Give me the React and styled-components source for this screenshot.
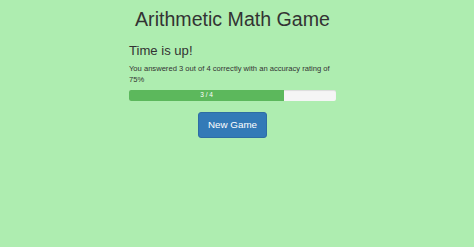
import React from "react";
import styled, { createGlobalStyle } from "styled-components";

const GlobalStyle = createGlobalStyle`
  html, body {
    margin: 0;
    padding: 0;
    background: #aeedb0;
  }
  body {
    font-family: "Liberation Sans", Arial, sans-serif;
    color: #333;
  }
`;

const Page = styled.div`
  display: flex;
  flex-direction: column;
  align-items: center;
  padding-right: 9px;
  padding-top: 9px;
`;

const Title = styled.h1`
  margin: 0 0 13px;
  font-size: 19.6px;
  font-weight: 400;
  line-height: 1.1;
`;

const Panel = styled.div`
  width: 207px;
  display: flex;
  flex-direction: column;
`;

const Heading = styled.h3`
  margin: 0 0 6px;
  font-size: 13.1px;
  font-weight: 400;
  line-height: 1.1;
`;

const Message = styled.p`
  margin: 0 0 4.5px;
  font-size: 7.6px;
  line-height: 1.43;
`;

const Track = styled.div`
  display: flex;
  height: 10.9px;
  background: #f5f5f5;
  border-radius: 2px;
  overflow: hidden;
  box-shadow: inset 0 1px 1px rgba(0, 0, 0, 0.1);
`;

const Fill = styled.div`
  display: flex;
  align-items: center;
  justify-content: center;
  background: #5cb85c;
  color: #fff;
  font-size: 6.5px;
  line-height: 10.9px;
`;

const Actions = styled.div`
  display: flex;
  justify-content: center;
  margin-top: 11px;
`;

const Button = styled.button`
  font-family: "Liberation Sans", Arial, sans-serif;
  font-size: 9.8px;
  line-height: 1.333;
  padding: 5.45px 8.7px;
  color: #fff;
  background: #337ab7;
  border: 0.55px solid #2e6da4;
  border-radius: 3px;
  cursor: pointer;
`;

export default function App() {
  const correct = 3;
  const total = 4;
  const pct = Math.round((correct / total) * 100);
  return (
    <>
      <GlobalStyle />
      <Page>
        <Title>Arithmetic Math Game</Title>
        <Panel>
          <Heading>Time is up!</Heading>
          <Message>
            You answered {correct} out of {total} correctly with an accuracy rating of {pct}%
          </Message>
          <Track>
            <Fill style={{ width: `${pct}%` }}>
              {correct} / {total}
            </Fill>
          </Track>
          <Actions>
            <Button>New Game</Button>
          </Actions>
        </Panel>
      </Page>
    </>
  );
}
